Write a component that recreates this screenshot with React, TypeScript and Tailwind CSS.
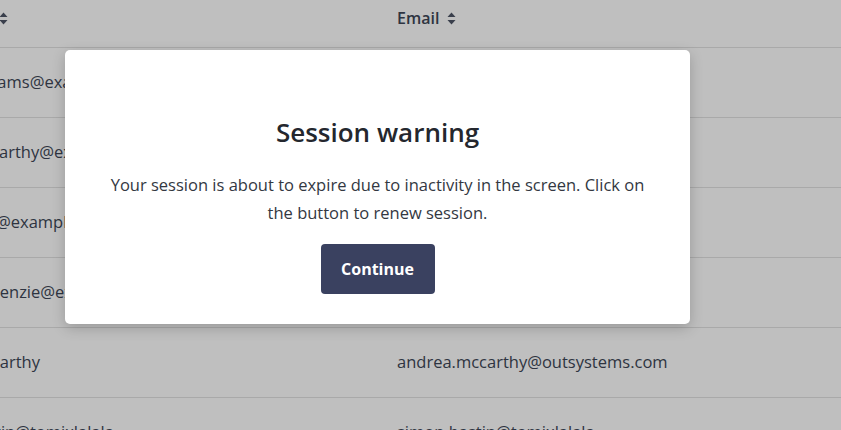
import React from "react";

function SortIcon() {
  return (
    <svg width="9" height="13" viewBox="0 0 9 13" className="shrink-0">
      <path d="M4.5 0.5 L8.5 5 L0.5 5 Z" fill="#3a3f4c" />
      <path d="M4.5 12.5 L8.5 8 L0.5 8 Z" fill="#3a3f4c" />
    </svg>
  );
}

const rows = [
  ["andrea.williams@example.com", ""],
  ["andrea.mccarthy@example.com", ""],
  ["andrea.reis@example.com", ""],
  ["andrea.mckenzie@example.com", ""],
  ["Andrea Mccarthy", "andrea.mccarthy@outsystems.com"],
  ["andrea.bastin@tomixlalala", "simon.bastin@tomixlalala"],
];

export default function App() {
  return (
    <div
      className="relative w-[841px] h-[430px] overflow-hidden bg-[#bfbfbf] text-[#2e3441]"
      style={{ fontFamily: "'Open Sans', 'Noto Sans', sans-serif" }}
    >
      <div className="flex flex-col ml-[-91px]">
        <div className="flex h-[48px] border-b border-[#a9a9a9] text-[16px] font-semibold">
          <div className="w-[488px] flex items-start pt-[6px] justify-start">
            <div className="flex items-center gap-[8px] w-[99px] justify-end">
              <span>Name</span>
              <SortIcon />
            </div>
          </div>
          <div className="flex items-center gap-[8px] self-start pt-[6px]">
            <span>Email</span>
            <SortIcon />
          </div>
        </div>
        {rows.map((r, i) => (
          <div
            key={i}
            className="flex h-[70px] border-b border-[#a9a9a9] items-center text-[16.5px]"
          >
            <div className="w-[488px] whitespace-nowrap">{r[0]}</div>
            <div className="whitespace-nowrap">{r[1]}</div>
          </div>
        ))}
      </div>

      <div className="absolute left-[65px] top-[50px] w-[625px] h-[274px] bg-white rounded-[5px] shadow-[0_4px_14px_rgba(0,0,0,0.2)] flex flex-col items-center pt-[66px]">
        <h2 className="text-[26px] leading-[32px] font-semibold text-[#24272e]">
          Session warning
        </h2>
        <p className="mt-[23px] text-[16.5px] leading-[28px] text-[#333842] text-center w-[545px]">
          Your session is about to expire due to inactivity in the screen. Click on the button to renew session.
        </p>
        <button className="mt-[17px] w-[114px] h-[50px] rounded-[4px] bg-[#3a4160] text-white text-[16px] font-bold">
          Continue
        </button>
      </div>
    </div>
  );
}
